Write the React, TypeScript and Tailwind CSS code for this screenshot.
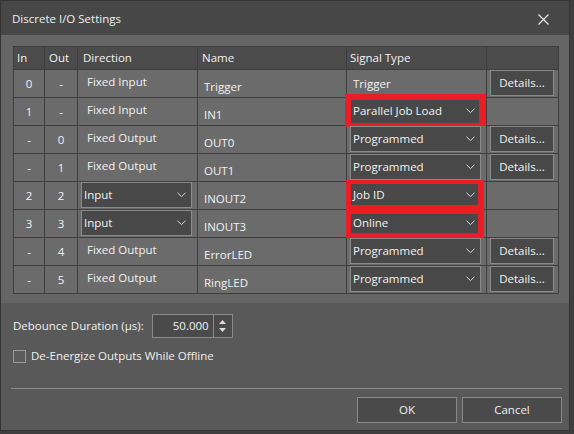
import React from "react";

type Row = {
  i: string;
  o: string;
  dir: string;
  dirDD?: boolean;
  name: string;
  sig: string;
  sigText?: boolean;
  red?: "a" | "b" | "c";
  details: boolean;
};

const rows: Row[] = [
  { i: "0", o: "-", dir: "Fixed Input", name: "Trigger", sig: "Trigger", sigText: true, details: true },
  { i: "1", o: "-", dir: "Fixed Input", name: "IN1", sig: "Parallel Job Load", red: "a", details: false },
  { i: "-", o: "0", dir: "Fixed Output", name: "OUT0", sig: "Programmed", details: true },
  { i: "-", o: "1", dir: "Fixed Output", name: "OUT1", sig: "Programmed", details: true },
  { i: "2", o: "2", dir: "Input", dirDD: true, name: "INOUT2", sig: "Job ID", red: "b", details: false },
  { i: "3", o: "3", dir: "Input", dirDD: true, name: "INOUT3", sig: "Online", red: "c", details: false },
  { i: "-", o: "4", dir: "Fixed Output", name: "ErrorLED", sig: "Programmed", details: true },
  { i: "-", o: "5", dir: "Fixed Output", name: "RingLED", sig: "Programmed", details: true },
];

function Chevron() {
  return (
    <svg width="9" height="6" viewBox="0 0 9 6" className="shrink-0">
      <path d="M0.5 0.8 L4.5 4.6 L8.5 0.8" fill="none" stroke="#d8d8d8" strokeWidth="1" />
    </svg>
  );
}

function Dropdown({ label }: { label: string }) {
  return (
    <div className="flex h-[26px] w-full items-center justify-between border border-[#8a8a8a] bg-[#484848] pl-[2px] pr-[5px] text-[#f2f2f2]">
      <span>{label}</span>
      <Chevron />
    </div>
  );
}

function RedBox({ kind }: { kind: "a" | "b" | "c" }) {
  if (kind === "a")
    return (
      <div className="pointer-events-none absolute -top-[4px] -bottom-[2px] -left-[2px] right-0 border-[6px] border-b-[4px] border-r-[7px] border-[#e81d25]" />
    );
  if (kind === "b")
    return (
      <div className="pointer-events-none absolute -top-[2px] -bottom-[1px] -left-[1px] right-[2px] border-[5px] border-t-[4px] border-r-[6px] border-[#e81d25]" />
    );
  return (
    <div className="pointer-events-none absolute -top-[1px] bottom-[-1px] -left-[1px] right-[2px] border-[5px] border-r-[6px] border-[#e81d25]" />
  );
}

export default function App() {
  const cell = "bg-[#6b6b6b] text-[#f2f2f2]";
  const head = "bg-[#4b4b4b] text-[#f2f2f2] flex items-center";
  return (
    <div className="h-[434px] w-[574px] bg-[#3e3e3e] font-['Segoe_UI','Open_Sans',sans-serif] text-[11.5px] leading-[16px]">
      <div className="flex h-[431px] w-[570px] flex-col border border-[#333333] bg-[#595959]">
        {/* Title bar */}
        <div className="flex h-[34px] shrink-0 items-center justify-between bg-[#474747] pl-[11px] pr-[20px] pt-[2px] text-[11.5px] text-[#f0f0f0]">
          <span>Discrete I/O Settings</span>
          <svg width="11" height="11" viewBox="0 0 11 11">
            <path d="M0.5 0.5 L10.5 10.5 M10.5 0.5 L0.5 10.5" stroke="#e6e6e6" strokeWidth="1.2" />
          </svg>
        </div>
        {/* Table panel */}
        <div className="h-[268px] shrink-0 bg-[#656565] pl-[12px] pt-[11px]">
          <div className="grid w-fit grid-cols-[30px_32px_119px_148px_139px_71px] grid-rows-[22px_repeat(8,27px)] gap-px border border-[#3d3d3d] bg-[#3d3d3d]">
            <div className={`${head} pl-[3px]`}>In</div>
            <div className={`${head} pl-[4px]`}>Out</div>
            <div className={`${head} pl-[5px]`}>Direction</div>
            <div className={`${head} pl-[4px]`}>Name</div>
            <div className={`${head} pl-[3px]`}>Signal Type</div>
            <div className={head}></div>
            {rows.map((r, idx) => (
              <React.Fragment key={idx}>
                <div className={`${cell} flex items-center justify-center ${r.i === "-" ? "text-[#c9c9c9]" : ""}`}>{r.i}</div>
                <div className={`${cell} flex items-center justify-center ${r.o === "-" ? "text-[#c9c9c9]" : ""}`}>{r.o}</div>
                {r.dirDD ? (
                  <div className={`${cell} flex items-start pl-[3px] pr-[5px]`}>
                    <Dropdown label={r.dir} />
                  </div>
                ) : (
                  <div className={`${cell} flex items-start pl-[9px] pt-[4px]`}>{r.dir}</div>
                )}
                <div className={`${cell} flex items-end pb-[2px] pl-[6px]`}>{r.name}</div>
                {r.sigText ? (
                  <div className={`${cell} flex items-center pl-[6px]`}>{r.sig}</div>
                ) : (
                  <div className={`${cell} relative flex items-start pl-[3px] pr-[5px]`}>
                    <Dropdown label={r.sig} />
                    {r.red && <RedBox kind={r.red} />}
                  </div>
                )}
                <div className={`${cell} flex items-start pl-[3px] pr-[4px]`}>
                  {r.details && (
                    <div className="flex h-[26px] w-full items-center justify-center border border-[#8a8a8a] bg-[#484848] text-[#f2f2f2]">
                      Details...
                    </div>
                  )}
                </div>
              </React.Fragment>
            ))}
          </div>
        </div>
        {/* Lower section */}
        <div className="flex flex-1 flex-col pl-[10px] pr-[7px] text-[#f0f0f0]">
          <div className="mt-[11px] flex items-center pl-[2px]">
            <span>Debounce Duration (µs):</span>
            <div className="ml-[8px] flex h-[24px] w-[81px] border border-[#8a8a8a] bg-[#4a4a4a]">
              <div className="flex flex-1 items-center justify-end pr-[4px]">50.000</div>
              <div className="flex w-[19px] flex-col items-center justify-center gap-[4px] border-l border-[#8a8a8a]">
                <svg width="7" height="4" viewBox="0 0 7 4">
                  <path d="M3.5 0 L7 4 L0 4 Z" fill="#dcdcdc" />
                </svg>
                <svg width="7" height="4" viewBox="0 0 7 4">
                  <path d="M0 0 L7 0 L3.5 4 Z" fill="#dcdcdc" />
                </svg>
              </div>
            </div>
          </div>
          <div className="mt-[10px] flex items-center pl-[2px]">
            <div className="h-[13px] w-[13px] border border-[#9a9a9a] bg-[#5c5c5c]" />
            <span className="ml-[5px]">De-Energize Outputs While Offline</span>
          </div>
          <div className="mt-[24px] h-px w-[551px] bg-[#8e8e8e]" />
          <div className="mt-[8px] flex justify-end gap-[5px]">
            <div className="flex h-[26px] w-[100px] items-center justify-center border border-[#8a8a8a] bg-[#4a4a4a]">OK</div>
            <div className="flex h-[26px] w-[100px] items-center justify-center border border-[#8a8a8a] bg-[#4a4a4a]">Cancel</div>
          </div>
        </div>
      </div>
    </div>
  );
}
